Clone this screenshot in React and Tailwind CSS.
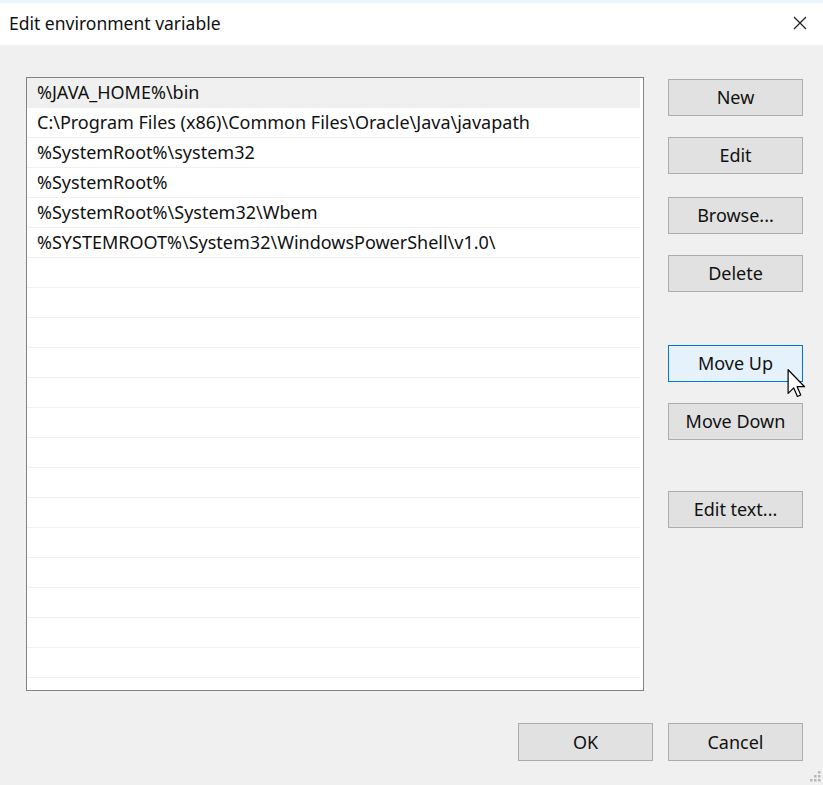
import React from "react";

const items = [
  "%JAVA_HOME%\\bin",
  "C:\\Program Files (x86)\\Common Files\\Oracle\\Java\\javapath",
  "%SystemRoot%\\system32",
  "%SystemRoot%",
  "%SystemRoot%\\System32\\Wbem",
  "%SYSTEMROOT%\\System32\\WindowsPowerShell\\v1.0\\",
];

const rows = Array.from({ length: 20 }, (_, i) => items[i] || "");

function Btn({ children, className = "", hover = false }) {
  return (
    <div
      className={
        "w-[135px] h-[37px] flex items-center justify-center text-[18px] text-[#111] border " +
        (hover ? "bg-[#e5f1fb] border-[#0078d7] " : "bg-[#e1e1e1] border-[#adadad] ") +
        className
      }
    >
      {children}
    </div>
  );
}

export default function App() {
  return (
    <div
      className="w-[823px] h-[785px] bg-[#f0f0f0] relative overflow-hidden"
      style={{ fontFamily: '"Noto Sans", "Open Sans", sans-serif' }}
    >
      <div className="h-[45px] bg-white border-t-[3px] border-[#e9f6fb] flex items-center justify-between pl-[9px] pr-[16px]">
        <span className="text-[17.5px] text-[#111] -mt-[2px]">Edit environment variable</span>
        <svg width="14" height="14" viewBox="0 0 14 14" className="-mt-[2px]">
          <path d="M1 1L13 13M13 1L1 13" stroke="#222" strokeWidth="1.3" />
        </svg>
      </div>

      <div className="flex pl-[26px] pt-[32px]">
        <div className="w-[618px] h-[614px] bg-white border border-[#828282] overflow-hidden flex flex-col">
          {rows.map((t, i) => (
            <div key={i} className="h-[30px] shrink-0 pr-[3px]">
              <div
                className={
                  "h-[29px] flex items-center pl-[10px] text-[18px] text-[#111] whitespace-nowrap " +
                  (i === 0 ? "bg-[#f0f0f0]" : "")
                }
              >
                {t}
              </div>
              <div className="h-px bg-[#efefef]" />
            </div>
          ))}
        </div>

        <div className="flex flex-col ml-[24px] pt-[2px]">
          <Btn>New</Btn>
          <Btn className="mt-[21px]">Edit</Btn>
          <Btn className="mt-[23px]">Browse...</Btn>
          <Btn className="mt-[21px]">Delete</Btn>
          <Btn className="mt-[53px]" hover>Move Up</Btn>
          <Btn className="mt-[21px]">Move Down</Btn>
          <Btn className="mt-[51px]">Edit text...</Btn>
        </div>
      </div>

      <div className="flex justify-end gap-[15px] pr-[20px] mt-[32px]">
        <Btn className="h-[38px]">OK</Btn>
        <Btn className="h-[38px]">Cancel</Btn>
      </div>

      <svg
        className="absolute left-[787px] top-[369px]"
        width="19"
        height="29"
        viewBox="0 0 12 19"
      >
        <path
          d="M0.5 0.5 L0.5 16 L4.2 12.4 L6.6 18 L8.8 17 L6.4 11.6 L11.3 11.6 Z"
          fill="white"
          stroke="black"
          strokeWidth="0.8"
          strokeLinejoin="round"
        />
      </svg>

      <svg className="absolute left-[808px] top-[770px]" width="14" height="14" viewBox="0 0 14 14">
        {[
          [10, 1],
          [6, 5],
          [10, 5],
          [2, 9],
          [6, 9],
          [10, 9],
        ].map(([x, y], i) => (
          <rect key={i} x={x} y={y} width="2.5" height="2.5" fill="#b8b8b8" />
        ))}
      </svg>
    </div>
  );
}
